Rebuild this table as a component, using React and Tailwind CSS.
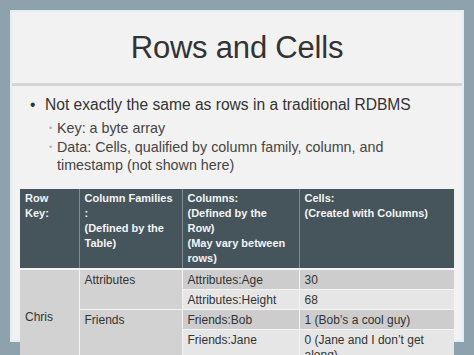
const rows = [
  { col: 'Attributes:Age', cell: '30', bg: 'bg-[#cdcdcd]' },
  { col: 'Attributes:Height', cell: '68', bg: 'bg-[#e6e6e6]' },
  { col: 'Friends:Bob', cell: '1 (Bob’s a cool guy)', bg: 'bg-[#cdcdcd]' },
  { col: 'Friends:Jane', cell: '0 (Jane and I don’t get along)', bg: 'bg-[#e6e6e6]' },
];

const App = () => {
  return (
    <div className="w-[474px] h-[355px] overflow-hidden bg-[#8ea2ad] pt-[10px] pl-[10px] font-['Liberation_Sans',Arial,sans-serif]">
      <div className="w-[454px] h-[332px] border-2 border-[#e4edf1] bg-[#f2f2f2]">
        {/* Title */}
        <div className="h-[71px] flex items-center justify-center pt-[2px]">
          <h1 className="text-[31px] text-[#333333] tracking-[-0.2px]">Rows and Cells</h1>
        </div>
        <div className="h-[3px] bg-[#d5d5d5]" />

        {/* Bullets */}
        <div className="pt-[9px] pl-[18px] text-[#333333]">
          <div className="flex text-[15.6px] leading-[20px]">
            <span className="w-[15px] shrink-0">•</span>
            <span>Not exactly the same as rows in a traditional RDBMS</span>
          </div>
          <div className="mt-[4px] pl-[19px] text-[14.3px] leading-[18px] text-[#444444]">
            <div className="flex">
              <span className="w-[8px] shrink-0 text-[#b0b0b0] text-[9px]">•</span>
              <span>Key: a byte array</span>
            </div>
            <div className="flex mt-[1px]">
              <span className="w-[8px] shrink-0 text-[#b0b0b0] text-[9px]">•</span>
              <span>Data: Cells, qualified by column family, column, and<br />timestamp (not shown here)</span>
            </div>
          </div>
        </div>

        {/* Table */}
        <table className="mt-[15px] ml-[8px] w-[434px] table-fixed border-collapse text-[12px] leading-[15px]">
          <colgroup>
            <col className="w-[59px]" />
            <col className="w-[103px]" />
            <col className="w-[117px]" />
            <col className="w-[155px]" />
          </colgroup>
          <thead>
            <tr className="bg-[#46545c] text-[#f4f4f4] text-[11px] align-top border-b-2 border-[#f4f4f4]">
              <th className="text-left font-bold px-[5px] pt-[2px] pb-[2px] h-[79px] border-r border-[#7d8a91]">Row<br />Key:</th>
              <th className="text-left font-bold px-[5px] pt-[2px] pb-[2px] border-r border-[#7d8a91]">Column Families<br />:<br />(Defined by the<br />Table)</th>
              <th className="text-left font-bold px-[5px] pt-[2px] pb-[2px] border-r border-[#7d8a91]">Columns:<br />(Defined by the<br />Row)<br />(May vary between<br />rows)</th>
              <th className="text-left font-bold px-[5px] pt-[2px] pb-[2px]">Cells:<br />(Created with Columns)</th>
            </tr>
          </thead>
          <tbody className="text-[#333333]">
            {rows.map((r, i) => (
              <tr key={r.col} className="align-top">
                {i === 0 && (
                  <td rowSpan={4} className="bg-[#d2d2d2] px-[5px] align-middle border-r border-[#f4f4f4]">Chris</td>
                )}
                {i === 0 && (
                  <td rowSpan={2} className="bg-[#d2d2d2] px-[5px] pt-[3px] border-r border-b border-[#f4f4f4]">Attributes</td>
                )}
                {i === 2 && (
                  <td rowSpan={2} className="bg-[#d2d2d2] px-[5px] pt-[3px] border-r border-[#f4f4f4]">Friends</td>
                )}
                <td className={`${r.bg} px-[5px] pt-[3px] pb-[1px] h-[19px] border-r border-b border-[#f4f4f4]`}>{r.col}</td>
                <td className={`${r.bg} px-[5px] pt-[3px] pb-[1px] border-b border-[#f4f4f4]`}>{r.cell}</td>
              </tr>
            ))}
          </tbody>
        </table>
      </div>
    </div>
  );
};

export default App;
